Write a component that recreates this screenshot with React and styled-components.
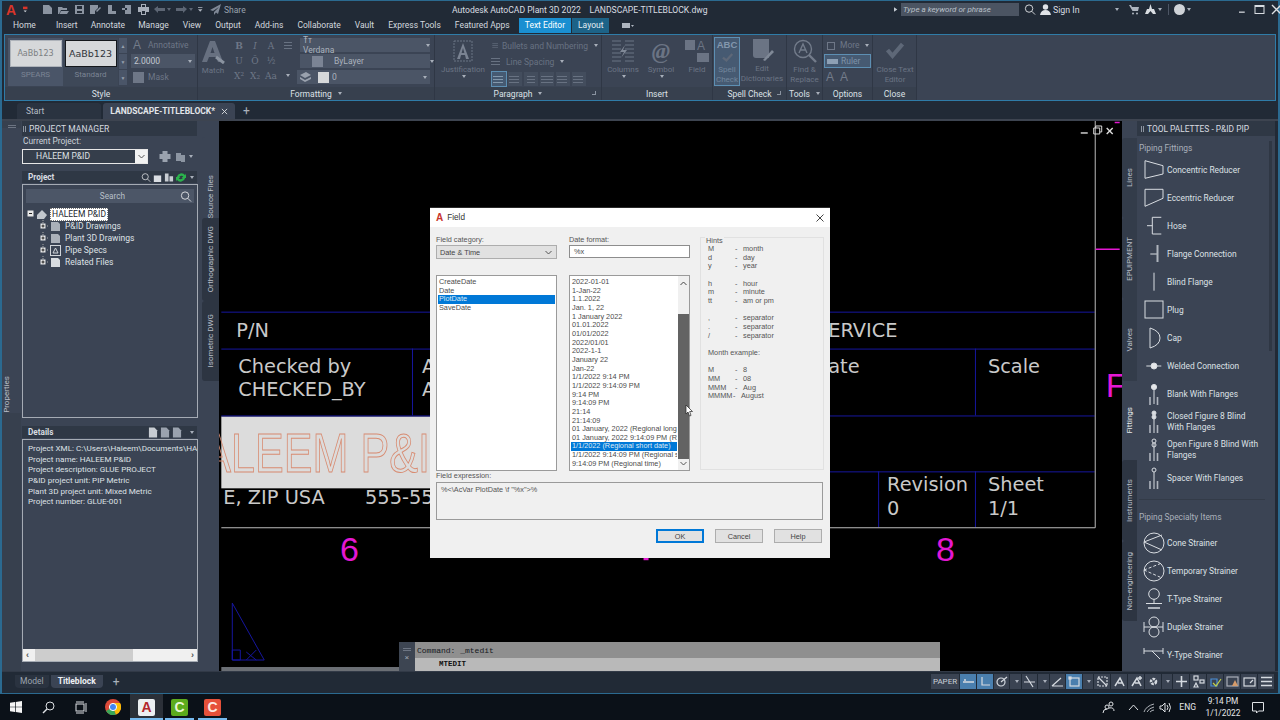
import React from 'react';
import styled, { createGlobalStyle } from 'styled-components';

const Global = createGlobalStyle`
  html, body { margin: 0; padding: 0; background: #0a0e13; }
  * { box-sizing: border-box; }
`;

const UI = `Roboto, "Liberation Sans", sans-serif`;
const DLG = `"Liberation Sans", Arial, sans-serif`;

const Page = styled.div`
  position: relative; width: 1280px; height: 720px; overflow: hidden;
  display: flex; flex-direction: column; font-family: ${UI}; font-size: 8.5px; color: #d7dce2;
`;
const Window = styled.div`
  height: 694px; display: flex; flex-direction: column; background: #212a36;
  border: 1px solid #2b6a90; border-left-width: 2px; border-right-width: 2px;
`;

/* title bar */
const TitleBar = styled.div`
  height: 17px; flex: none; display: flex; align-items: center; position: relative; padding-left: 4px;
`;
const Qat = styled.div`display: flex; align-items: center; gap: 5px; width: 446px; flex: none;`;
const LogoA = styled.span`
  font: bold 14px "Liberation Sans", sans-serif; color: #d8352a; line-height: 14px; width: 12px;
`;
const Qi = styled.svg`width: ${p => p.$w || 11}px; height: 11px; flex: none; fill: ${p => p.$c || '#8b94a1'}; stroke: none;`;
const QatLabel = styled.span`color: #9aa2ae; margin-left: -2px;`;
const WindowTitle = styled.div`flex: none; width: 442px; color: #d9dde2; font-size: 8.6px; white-space: pre;`;
const SearchBox = styled.div`
  width: 118px; height: 13px; background: #4b5462; color: #b9c0c9; font-style: italic; font-size: 8px;
  padding-left: 2px; line-height: 13px; margin: 0 5px 0 3px; flex: none;
`;
const TitleRight = styled.div`display: flex; align-items: center; flex: none;`;
const SignIn = styled.span`width: 60px; color: #d9dde2; font-size: 8.8px; margin-left: 2px;`;
const Gap = styled.span`display: inline-block; width: ${p => p.$w}px; flex: none;`;

/* menu */
const MenuRow = styled.div`height: 15px; flex: none; display: flex; align-items: stretch; padding-left: 4px;`;
const MenuTab = styled.div`
  padding: 0 ${p => p.$px ?? 7}px; margin-right: ${p => p.$mr || 0}px; line-height: 15px; color: #d3d8df;
  ${p => p.$active && 'background:#1a8fd1;color:#fff;'}
  ${p => p.$alt && 'background:#1d6388;color:#e4edf3;margin-left:1px;'}
`;
const MenuExtra = styled.svg`width: 16px; height: 15px; margin-left: 9px; fill: #aeb5bf;`;

/* ribbon */
const Ribbon = styled.div`
  height: 67px; flex: none; margin: 1px 2px 0 2px; display: flex; background: #3b4454;
  border-top: 1px solid #2f7ca8; border-bottom: 1px solid #2f7ca8; border-left: 1px solid #2f7ca8; border-right: 1px solid #2f7ca8;
`;
const RGroup = styled.div`
  width: ${p => p.$w}px; flex: none; display: flex; flex-direction: column; border-right: 1px solid #2f3745;
`;
const RBody = styled.div`flex: 1; display: flex; min-height: 0; padding: ${p => p.$pad || '3px 3px 0'}; gap: ${p => p.$gap || 0}px;`;
const RLabel = styled.div`
  height: 13px; flex: none; display: flex; align-items: center; justify-content: center; gap: 4px;
  color: #dde1e6; font-size: 8.5px; background: #37404e; position: relative;
`;
const Caret = styled.span`
  display: inline-block; width: 0; height: 0; border-left: 2px solid transparent; border-right: 2px solid transparent;
  border-top: 3px solid ${p => p.$c || '#a8afba'}; margin-left: ${p => p.$ml || 2}px; flex: none;
`;
const Launcher = styled.span`position: absolute; right: 5px; top: 4px; width: 4px; height: 4px; border-right: 1px solid #8a93a0; border-bottom: 1px solid #8a93a0;`;
const Gallery = styled.div`display: flex; height: 48px; flex: none;`;
const GalleryItem = styled.div`
  width: 55px; padding: 2px 2px 0; display: flex; flex-direction: column; align-items: center;
  background: ${p => p.$on ? '#4a5568' : '#3e4858'}; margin-right: ${p => p.$mr || 0}px;
`;
const Tile = styled.div`
  width: 52px; height: 27px; background: #d6d8da; border: 1px solid ${p => p.$on ? '#15181c' : '#aeb3ba'};
  color: ${p => p.$on ? '#31353a' : '#7c7f82'}; font-family: "DejaVu Sans", sans-serif; font-size: ${p => p.$on ? '9.5px' : '8px'};
  display: flex; align-items: center; justify-content: center; white-space: nowrap;
`;
const TileCap = styled.div`color: #7b8494; font-size: 8px; margin-top: 3px;`;
const Spinner = styled.div`width: 8px; flex: none; margin-left: 1px; display: flex; flex-direction: column; gap: 1px;`;
const SpinBtn = styled.div`height: 15px; background: #4a5568; display: flex; align-items: center; justify-content: center; color:#96a0ad; font-size: 5px;`;
const StyleOpts = styled.div`flex: 1; display: flex; flex-direction: column; margin-left: 4px; gap: 2px; min-width: 0;`;
const OptRow = styled.div`
  height: 14px; display: flex; align-items: center; gap: 4px; color: #6e7787; white-space: nowrap; padding-left: 2px;
`;
const Combo = styled.div`
  height: 14px; display: flex; align-items: center; color: ${p => p.$c || '#aab2bd'}; background: #4b5566; padding: 0 3px;
  width: ${p => p.$w ? p.$w + 'px' : 'auto'}; justify-content: space-between; gap: 3px; margin-left: ${p => p.$ml || 0}px;
`;
const BigTool = styled.div`
  width: ${p => p.$w}px; flex: none; display: flex; flex-direction: column; align-items: center; color: #6b7484; font-size: 8px;
  line-height: 10px; text-align: center; padding-top: ${p => p.$pt ?? 1}px;
  ${p => p.$on && 'border:1px solid #5d8fb3;background:#465a72;color:#72869c;'}
`;
const BigIcon = styled.svg`width: ${p => p.$w || 24}px; height: ${p => p.$h || 24}px; flex: none; margin-bottom: ${p => p.$mb ?? 2}px;`;
const FmtGrid = styled.div`
  width: 66px; flex: none; display: grid; grid-template-columns: repeat(4, 16px); grid-auto-rows: 15px; align-items: center;
  justify-items: center; color: #6e7787; font-family: "DejaVu Serif", serif; font-size: 9px; margin-left: 6px;
`;
const Stack = styled.div`display: flex; flex-direction: column; gap: ${p => p.$g ?? 2}px; flex: ${p => p.$f || '1'}; min-width: 0;`;
const ParaRow = styled.div`display: flex; align-items: center; gap: 4px; color: #687282; height: 15px; white-space: nowrap; font-size: 8.5px;`;
const AlignRow = styled.div`display: flex; gap: 0; margin-top: 1px;`;
const AlignBtn = styled.div`
  width: 16px; height: 16px; display: flex; align-items: center; justify-content: center;
  background: #434d5d; border: 1px solid ${p => p.$on ? '#5d8fb3' : '#3b4454'}; ${p => p.$on && 'background:#465a72;'}
`;
const SpellWord = styled.div`font: bold 9.5px "Liberation Sans", sans-serif; color: #8397ad; line-height: 11px; margin-top: 1px; letter-spacing: 0;`;
const OptsBox = styled.div`
  display: flex; align-items: center; gap: 3px; color: #6e7787; height: 14px; padding-left: 2px; white-space: nowrap;
  ${p => p.$on && 'border:1px solid #5d8fb3;background:#465a72;color:#7f93a8;'}
`;
const BigA = styled.span`font: 12px "Liberation Sans", sans-serif; color: #737c8b; margin-right: 3px; line-height: 14px;`;

/* doc tabs */
const DocTabs = styled.div`
  height: 20px; flex: none; display: flex; align-items: flex-end; padding-left: 15px; border-bottom: 2px solid #3d4450;
  margin-top: 0;
`;
const DocTab = styled.div`
  height: 16px; display: flex; align-items: center; gap: 6px; padding: 0 ${p => p.$px}px;
  border-radius: 3px 3px 0 0; font-size: 8.5px;
  background: ${p => p.$on ? '#3b4454' : '#2a3340'}; color: ${p => p.$on ? '#e3e6ea' : '#b7bdc6'};
  font-weight: ${p => p.$on ? 700 : 400}; margin-right: ${p => p.$mr || 0}px;
`;
const TabPlus = styled.span`font-size: 12px; color: #aab1bb; margin: 0 0 1px 8px; line-height: 14px;`;

/* main */
const Main = styled.div`flex: 1; min-height: 0; display: flex; background: #3b4454;`;
const SideStrip = styled.div`
  width: ${p => p.$w}px; flex: none; display: flex; flex-direction: column; background: #37404e; align-items: center;
`;
const Grip = styled.div`width: 8px; height: 3px; border-top: 1px solid #6d7583; border-bottom: 1px solid #6d7583; margin-top: 4px;`;
const VText = styled.span`
  writing-mode: vertical-rl; transform: rotate(180deg); font-size: 8px; color: ${p => p.$on ? '#e8ebee' : '#b8bec7'}; white-space: nowrap;
`;
const VTabs = styled.div`display: flex; flex-direction: column; width: ${p => p.$w}px; flex: none; padding-top: ${p => p.$pt}px; background: #3b4454;`;
const VTab = styled.div`
  height: ${p => p.$h}px; flex: none; display: flex; align-items: ${p => p.$al || 'center'}; justify-content: center;
  background: ${p => p.$bg || '#2d3542'}; border-radius: 3px 0 0 3px; padding-top: ${p => p.$pb || 0}px;
`;
const Panel = styled.div`width: 181px; flex: none; display: flex; flex-direction: column; padding: 0 4px 0 1px;`;
const PanelHead = styled.div`
  height: 15px; flex: none; background: #2f3845; color: #d7dbe0; display: flex; align-items: center; gap: 3px; font-size: 8.5px;
  letter-spacing: .1px; padding-left: 0; width: 175px;
`;
const VGrip = styled.span`width: 2px; height: 6px; border-left: 1px solid #8d95a1; border-right: 1px solid #8d95a1; width: 3px; margin-left: 1px;`;
const SmallLabel = styled.div`color: #cdd2d9; font-size: 8.4px; height: 11px; line-height: 11px; margin: 0 0 0 1px;`;
const ProjectRow = styled.div`display: flex; align-items: center; height: 16px; margin-top: 1px; flex: none;`;
const ProjectSelect = styled.div`
  width: 126px; height: 15px; flex: none; border: 1px solid #e7e7e7; background: #353e4b; display: flex; align-items: center;
  justify-content: space-between; padding-left: 13px; color: #dde1e5; font-size: 8.5px;
`;
const SelBtn = styled.span`width: 12px; height: 100%; background: #f2f2f2; display: flex; align-items: center; justify-content: center;`;
const Chevron = styled.svg`width: 7px; height: 5px; fill: none; stroke: ${p => p.$c || '#555'}; stroke-width: 1;`;
const SectionHead = styled.div`
  height: 12px; flex: none; background: #2f3845; display: flex; align-items: center; justify-content: space-between;
  font-weight: 700; padding: 0 3px 0 6px; width: 175px; margin-top: ${p => p.$mt}px; color: #d8dce1; font-size: 8.2px;
`;
const HeadIcons = styled.div`display: flex; gap: 2px; align-items: center;`;
const Box = styled.div`
  width: 176px; height: ${p => p.$h}px; flex: none; border: 1px solid #a5abb4; margin-top: 1px; display: flex; flex-direction: column;
`;
const TreeSearch = styled.div`
  margin: 4px 3px 0; height: 14px; background: #4c5667; color: #b9c0c9; display: flex; align-items: center; justify-content: flex-end;
  padding-right: 2px; gap: 55px; font-size: 8.2px; flex: none;
`;
const Tree = styled.div`padding: 5px 0 0 4px; display: flex; flex-direction: column;`;
const TreeRow = styled.div`display: flex; align-items: center; height: 12px; padding-left: ${p => p.$in}px; gap: 1px; font-size: 8.5px; color: #dfe2e6;`;
const TreeLabel = styled.span`
  ${p => p.$sel && 'background:#fff;color:#23282f;border:1px dotted #777;padding:0 1px;margin-left:1px;line-height:11px;'}
  margin-left: ${p => p.$sel ? 1 : 3}px; white-space: nowrap;
`;
const Details = styled.div`flex: 1; padding: 3px 0 0 5px; font-size: 8.1px; line-height: 10.67px; color: #dfe2e6; overflow: hidden; white-space: nowrap;`;
const HScroll = styled.div`height: 12px; flex: none; background: #f0f0f0; display: flex; align-items: center; justify-content: space-between; padding: 0 3px; position: relative;`;
const HThumb = styled.div`position: absolute; left: 12px; width: 98px; top: 0; bottom: 0; background: #cdcdcd;`;
const ArrowT = styled.span`font: bold 9px "Liberation Sans", sans-serif; color: #555; line-height: 10px; z-index: 1;`;

/* canvas */
const Canvas = styled.div`flex: 1; min-width: 0; position: relative; background: #000; overflow: hidden;`;
const Drawing = styled.svg`display: block; width: 100%; height: 100%;`;
const CommandLine = styled.div`
  position: absolute; left: 180px; top: 521px; width: 541px; height: 30px; display: flex; background: #3d4552;
`;
const CmdSide = styled.div`width: 16px; flex: none; display: flex; flex-direction: column; align-items: center; color: #9aa2ae; font-size: 8px; padding-top: 2px; gap: 2px;`;
const CmdBody = styled.div`flex: 1; display: flex; flex-direction: column;`;
const CmdHist = styled.div`height: 16px; background: #8f8f8f; color: #15191e; font: 8px "Liberation Mono", monospace; padding: 4px 0 0 2px; line-height: 10px;`;
const CmdInput = styled.div`flex: 1; background: #b9b9b9; color: #111; font: bold 7.5px "Liberation Mono", monospace; padding-left: 24px; line-height: 12px;`;

/* palette */
const PaletteWrap = styled.div`width: 138px; flex: none; display: flex; flex-direction: column; position: relative; overflow: hidden;`;
const PaletteHead = styled.div`height: 15px; flex: none; background: #2f3845; display: flex; align-items: center; gap: 3px; color: #d7dbe0; font-size: 8.4px; padding-left: 3px;`;
const PaletteBody = styled.div`flex: 1; overflow: hidden; padding-left: 5px;`;
const SectionTitle = styled.div`
  height: ${p => p.$h}px; display: flex; align-items: flex-end; color: #a9b0ba; font-size: 8.4px; padding: 0 0 ${p => p.$pb}px 0; margin-left: -3px;
  ${p => p.$rule && 'position:relative;'}
`;
const Rule = styled.div`position: absolute; left: 0; right: 10px; top: 7px; height: 1px; background: #333b48;`;
const Item = styled.div`height: 28px; display: flex; align-items: center; gap: 1px; color: #dde1e5; font-size: 8.4px; line-height: 11px;`;
const ItemIcon = styled.svg`width: 24px; height: 24px; flex: none; fill: none; stroke: #d9dde2; stroke-width: 1;`;
const ItemName = styled.span`width: 92px; flex: none;`;
const PaletteScroll = styled.div`position: absolute; right: 3px; top: 20px; width: 3px; height: 210px; background: #2f3744;`;
const RightGutter = styled.div`width: 3px; flex: none; background: #212a36;`;

/* bottom row */
const BottomRow = styled.div`height: 22px; flex: none; display: flex; align-items: center; padding-left: 13px; background: #212a36; border-top: 1px solid #323a47;`;
const LayoutTab = styled.div`
  height: 13px; display: flex; align-items: center; margin-top: -3px; padding: 0 ${p => p.$px}px; border-radius: 0 0 4px 4px; font-size: 8.5px;
  background: ${p => p.$on ? '#3b4454' : '#2a3340'}; color: ${p => p.$on ? '#edf0f3' : '#9ca3ae'}; font-weight: ${p => p.$on ? 700 : 400};
  margin-right: 2px;
`;
const StatusBar = styled.div`margin-left: auto; display: flex; align-items: center; gap: 1px; padding-right: 4px; margin-top: -2px;`;
const SCell = styled.div`
  width: ${p => p.$w}px; height: 15px; flex: none; display: flex; align-items: center; justify-content: center;
  background: ${p => p.$on ? '#4a7fae' : '#3a4352'}; color: #c8ced6; font-size: 8px;
`;
const SI = styled.svg`width: 13px; height: 13px; fill: none; stroke: #d5dae0; stroke-width: 1.2;`;

/* taskbar */
const Taskbar = styled.div`flex: 1; display: flex; align-items: stretch; background: #0b1118;`;
const TBtn = styled.div`
  width: ${p => p.$w}px; flex: none; display: flex; align-items: center; justify-content: center; position: relative;
  ${p => p.$on && 'background:#2b3038;'}
  ${p => p.$under && `&::after{content:"";position:absolute;left:${p.$on ? 0 : 2}px;right:${p.$on ? 0 : 2}px;bottom:0;height:2px;background:#76b9ed;}`}
`;
const AppTile = styled.div`
  width: 17px; height: 17px; border-radius: 2px; background: ${p => p.$bg}; color: ${p => p.$c}; display: flex; align-items: center; justify-content: center;
  font: bold 14px "Liberation Sans", sans-serif;
`;
const Tray = styled.div`margin-left: auto; display: flex; align-items: center; color: #e6e8ea; font-size: 8.5px;`;
const Clock = styled.div`text-align: center; width: 36px; line-height: 12.5px; font-size: 8.3px;`;
const TI = styled.svg`width: ${p => p.$w || 13}px; height: 13px; fill: none; stroke: #dfe2e5; stroke-width: 1; flex: none;`;

/* dialog */
const Dialog = styled.div`
  position: absolute; left: 430px; top: 207px; width: 400px; height: 351px; background: #f0f0f0; color: #4a4a4a;
  font-family: ${DLG}; font-size: 7.3px; display: flex; flex-direction: column; border-top: 1px solid #2a2a2a;
`;
const DlgTitle = styled.div`height: 19px; flex: none; background: #fff; display: flex; align-items: center; padding: 0 6px; color: #333; font-size: 8.2px; gap: 4px;`;
const DlgA = styled.span`font: bold 10px "Liberation Sans", sans-serif; color: #c8352c; line-height: 10px;`;
const DlgClose = styled.svg`margin-left: auto; margin-right: 0; width: 8px; height: 8px; stroke: #444; fill: none;`;
const DlgBody = styled.div`flex: 1; padding: 7px 7px 0 6px; display: flex; flex-direction: column;`;
const Columns = styled.div`display: grid; grid-template-columns: 121px 121px 122px; column-gap: 12px; height: 236px;`;
const Col = styled.div`display: flex; flex-direction: column; margin-left: ${p => p.$ml || 0}px; width: ${p => p.$wd ? p.$wd + 'px' : 'auto'};`;
const FLabel = styled.div`height: ${p => p.$h || 11}px; line-height: 9px; padding-top: 1px; color: #555;`;
const DCombo = styled.div`height: 14px; background: #e1e1e1; border: 1px solid #adadad; display: flex; align-items: center; justify-content: space-between; padding: 0 4px 0 3px; flex: none; color: #444;`;
const DInput = styled.div`height: 13px; background: #fff; border: 1px solid #8d8d8d; padding: 1px 0 0 4px; line-height: 9px; flex: none;`;
const ListBox = styled.div`flex: 1; background: #fff; border: 1px solid #9a9a9a; position: relative; padding: 2px 1px; overflow: hidden; margin-bottom: ${p => p.$mb || 0}px;`;
const LRow = styled.div`
  height: 8.67px; line-height: 8.67px; padding-left: 1px; white-space: nowrap; overflow: hidden; max-width: ${p => p.$max ? p.$max + 'px' : 'none'};
  color: #4c4c4c; ${p => p.$sel && 'background:#0078d7;color:#dfeaf5;'}
`;
const VScroll = styled.div`
  position: absolute; right: 0; top: 0; bottom: 0; width: 11px; background: #f0f0f0; display: flex; flex-direction: column; align-items: center; justify-content: space-between; padding: 5px 0 4px;
`;
const VThumb = styled.div`position: absolute; left: 0; right: 0; top: 38px; height: 145px; background: #636363;`;
const Hints = styled.div`border: 1px solid #e1e1e1; height: 233px; margin-top: 3px; position: relative; padding: 7px 0 0 7px;`;
const HintsLegend = styled.span`position: absolute; left: 4px; top: -2px; background: #f0f0f0; padding: 0 1px; color: #555;`;
const HintRow = styled.div`display: grid; grid-template-columns: ${p => p.$w || 27}px 8px 1fr; height: 8.67px; line-height: 8.67px; color: #555;`;
const HintText = styled.div`height: 8.67px; line-height: 8.67px; color: #555;`;
const Expr = styled.div`
  height: 38px; width: 387px; border: 1px solid #9a9a9a; padding: 2px 4px; line-height: 9px; flex: none; color: #555; margin-top: 3px;
`;
const DlgButtons = styled.div`display: flex; justify-content: flex-end; gap: 11px; margin-top: 9px; padding-right: 1px;`;
const DBtn = styled.div`
  width: 48px; height: 14px; display: flex; align-items: center; justify-content: center; background: #e1e1e1; color: #444;
  border: 1px solid ${p => p.$def ? '#0078d7' : '#adadad'}; ${p => p.$def && 'box-shadow: inset 0 0 0 1px #0078d7;'}
`;
const Cursor = styled.svg`position: absolute; left: 255px; top: 196px; width: 8px; height: 13px;`;

/* drawing helpers */
const check = <polyline points="5,13 11,18 21,7" fill="none" stroke="#5e6878" strokeWidth="4" />;
const lines = (n, x1, x2, s = '#687282') => Array.from({ length: n }, (_, i) => <line key={i} x1={x1} x2={x2} y1={2.5 + i * 3} y2={2.5 + i * 3} stroke={s} />);

const DOWN = () => <Chevron viewBox="0 0 7 5"><path d="M0.5 1 L3.5 4 L6.5 1" /></Chevron>;

const examples = ['2022-01-01', '1-Jan-22', '1.1.2022', 'Jan. 1, 22', '1 January 2022', '01.01.2022', '01/01/2022', '2022/01/01', '2022-1-1', 'January 22', 'Jan-22', '1/1/2022 9:14 PM', '1/1/2022 9:14:09 PM', '9:14 PM', '9:14:09 PM', '21:14', '21:14:09', '01 January, 2022 (Regional long', '01 January, 2022 9:14:09 PM (Re', '1/1/2022 (Regional short date)', '1/1/2022 9:14:09 PM (Regional s', '9:14:09 PM (Regional time)'];
const hintRows = [['M', 'month'], ['d', 'day'], ['y', 'year'], null, ['h', 'hour'], ['m', 'minute'], ['tt', 'am or pm'], null, [',', 'separator'], ['.', 'separator'], ['/', 'separator'], null];
const monthRows = [['M', '8'], ['MM', '08'], ['MMM', 'Aug']];

const Fig8 = ({ open, spacer }) => (
  <ItemIcon viewBox="0 0 24 24">
    <circle cx="12" cy={spacer ? 4 : 3} r="2" fill={open || spacer ? 'none' : '#d9dde2'} />
    {!spacer && <circle cx="12" cy="7" r="2" fill={open ? 'none' : '#d9dde2'} fill-opacity={1} />}
    <path d="M12 6V23" />
    <path d="M8 15V23M15.5 15V23" strokeWidth="1.6" stroke="#aeb4bd" />
  </ItemIcon>
);

const palette1 = [
  ['Concentric Reducer', <polygon points="3,2.7 21,7.7 21,16 3,20.3" />],
  ['Eccentric Reducer', <polygon points="3,3.3 21,3.3 21,12.3 3,20.3" />],
  ['Hose', <path d="M5 11.7H10.3M19.3 3.3H10.3V20H19.3" />],
  ['Flange Connection', <><path d="M8.3 12H15" /><path d="M15.5 3V20" strokeWidth="2" stroke="#aeb4bd" /></>],
  ['Blind Flange', <path d="M12 2.7V20.7" />],
  ['Plug', <rect x="3" y="3" width="18" height="17" />],
  ['Cap', <path d="M8 2V22Q18 19 18 12Q18 5 8 2Z" />],
  ['Welded Connection', <><path d="M4.3 12H19.3" /><circle cx="12" cy="12" r="3" fill="#e6e8ea" /></>],
  ['Blank With Flanges', <><circle cx="12" cy="5" r="2.6" fill="#e6e8ea" /><path d="M12 5V22" /><path d="M8 15V23M15.5 15V23" strokeWidth="1.6" stroke="#aeb4bd" /></>],
];
const palette2 = [
  ['Cone Strainer', <><circle cx="12" cy="12" r="10" /><path d="M2 11L20 4M2 11L20 19" /></>],
  ['Temporary Strainer', <><circle cx="12" cy="12" r="10" /><path d="M2 11L20 4M2 11L20 19" strokeDasharray="3 2" /></>],
  ['T-Type Strainer', <><circle cx="12" cy="7" r="5.3" /><path d="M12 12V16M4 16.5H20" /><path d="M6 21H18" strokeWidth="2" stroke="#aeb4bd" /></>],
  ['Duplex Strainer', <><circle cx="12" cy="7" r="5" /><circle cx="12" cy="17" r="5" /><path d="M2 12H21M2 7V17M21 7V17" /></>],
  ['Y-Type Strainer', <path d="M2 8H21M2 5V11M21 5V11M10 8L18 16" />],
];

function PaletteRow({ name, icon }) {
  return <Item><ItemIcon viewBox="0 0 24 24">{icon}</ItemIcon><ItemName>{name}</ItemName></Item>;
}

const DText = styled.text`font-family: "DejaVu Sans", sans-serif; font-size: 19.4px; fill: #c9c9c9;`;
const Mag = styled.text`font-family: "Liberation Sans", sans-serif; font-size: 34px; fill: #e417d3;`;

export default function App() {
  return (
    <Page>
      <Global />
      <Window>
        <TitleBar>
          <Qat>
            <LogoA>A</LogoA>
            <Qi viewBox="0 0 11 11" $w={7}><rect x="0" y="1" width="7" height="4" fill="#d8352a" /><path d="M1 7H6L3.5 10Z" fill="#d0d4da" /></Qi>
            <Gap $w={2} />
            <Qi viewBox="0 0 11 11"><path d="M1 1H7L10 4V10H1Z" /></Qi>
            <Qi viewBox="0 0 11 11"><path d="M0 3H4L5 4H9V6H3L1 10H0ZM3 7H11L9 10H1.5Z" /></Qi>
            <Qi viewBox="0 0 11 11"><path d="M1 1H10V10H1ZM3 2V5H8V2ZM3 7V9H8V7Z" fillRule="evenodd" /></Qi>
            <Qi viewBox="0 0 11 11"><path d="M0 1H8V4L5 7V10H0ZM6 7L10 3L11 4L7 8Z" /></Qi>
            <Qi viewBox="0 0 11 11"><path d="M2 1H6V7H10V10H2Z" /></Qi>
            <Qi viewBox="0 0 11 11"><path d="M3 1H9V10H3ZM0 4H5V6H0Z" fillRule="evenodd" /></Qi>
            <Qi viewBox="0 0 11 11" $c="#a8afba"><path d="M3 0H8V3H11V8H8V11H3V8H0V3H3ZM4 1V3H7V1ZM4 7V10H7V7Z" fillRule="evenodd" /></Qi>
            <Qi viewBox="0 0 11 11" $c="#5d6674"><path d="M0 5L4 2V4H11V7H4V9Z" /></Qi>
            <Caret $c="#5d6674" $ml={-3} />
            <Qi viewBox="0 0 11 11" $c="#5d6674"><path d="M11 5L7 2V4H0V7H7V9Z" /></Qi>
            <Caret $c="#5d6674" $ml={-3} />
            <Qi viewBox="0 0 11 11" $w={7} $c="#aeb5bf"><path d="M0 2H7V3H0ZM0 5H7L3.5 9Z" /></Qi>
            <Qi viewBox="0 0 11 11" $c="#7f8896"><path d="M11 0L0 6L3 7L9 3L4 8L4 11L6 8.5L8 10Z" /></Qi>
            <QatLabel>Share</QatLabel>
          </Qat>
          <WindowTitle>Autodesk AutoCAD Plant 3D 2022    LANDSCAPE-TITLEBLOCK.dwg</WindowTitle>
          <TitleRight>
            <Qi viewBox="0 0 6 11" $w={4} $c="#c2c8d0"><path d="M0 2L5 5.5L0 9Z" /></Qi>
            <SearchBox>Type a keyword or phrase</SearchBox>
            <TI viewBox="0 0 13 13" $w={12}><circle cx="5.5" cy="5.5" r="4" /><path d="M8.5 8.5L12 12" /></TI>
            <Gap $w={4} />
            <Qi viewBox="0 0 11 11" $c="#e0e3e7"><circle cx="5.5" cy="3" r="2.7" /><path d="M0 11Q1 6 5.5 6Q10 6 11 11Z" /></Qi>
            <SignIn>Sign In</SignIn>
            <Caret /><Gap $w={10} />
            <Qi viewBox="0 0 11 11" $c="#aeb5bf"><path d="M0 1H2L3 3H10L9 7H3.5ZM4 8.5A1 1 0 1 0 4 10.5A1 1 0 1 0 4 8.5ZM8 8.5A1 1 0 1 0 8 10.5A1 1 0 1 0 8 8.5Z" /></Qi>
            <Gap $w={5} />
            <Qi viewBox="0 0 11 11" $c="#d9dde2"><path d="M5.5 0L7 5H9L11 10H8L5.5 7L3 10H0L2 5H4Z" /></Qi>
            <Caret /><Gap $w={6} />
            <Qi viewBox="0 0 1 11" $w={1} $c="#4d5665"><rect width="1" height="11" /></Qi>
            <Gap $w={5} />
            <Qi viewBox="0 0 11 11" $c="#cfd3d8"><circle cx="5.5" cy="5.5" r="5.5" /></Qi>
            <Caret /><Gap $w={48} />
            <Qi viewBox="0 0 11 11" $w={9} $c="#d9dde2"><rect x="0" y="8" width="7" height="1.5" /></Qi>
            <Gap $w={6} />
            <Qi viewBox="0 0 11 11" $c="none"><rect x="1" y="1.5" width="9" height="8" fill="none" stroke="#d9dde2" /><rect x="1" y="1" width="9" height="2" fill="#d9dde2" /></Qi>
            <Gap $w={6} />
            <TI viewBox="0 0 11 11" $w={11}><path d="M1 1L10 10M10 1L1 10" strokeWidth="1.4" /></TI>
          </TitleRight>
        </TitleBar>
        <MenuRow>
          <MenuTab $px={7} $mr={6}>Home</MenuTab>
          <MenuTab $px={7}>Insert</MenuTab>
          <MenuTab $px={6}>Annotate</MenuTab>
          <MenuTab $px={7}>Manage</MenuTab>
          <MenuTab $px={7}>View</MenuTab>
          <MenuTab $px={7}>Output</MenuTab>
          <MenuTab $px={7}>Add-ins</MenuTab>
          <MenuTab $px={7}>Collaborate</MenuTab>
          <MenuTab $px={7}>Vault</MenuTab>
          <MenuTab $px={7}>Express Tools</MenuTab>
          <MenuTab $px={7} $mr={2}>Featured Apps</MenuTab>
          <MenuTab $active $px={6}>Text Editor</MenuTab>
          <MenuTab $alt $px={6}>Layout</MenuTab>
          <MenuExtra viewBox="0 0 16 15"><rect x="4" y="5" width="8" height="5" /><path d="M13 7H16L14.5 9Z" /></MenuExtra>
        </MenuRow>
        <Ribbon>
          <RGroup $w={193}>
            <RBody $pad="3px 2px 0 3px">
              <Gallery>
                <GalleryItem $on><Tile>AaBb123</Tile><TileCap>SPEARS</TileCap></GalleryItem>
                <GalleryItem><Tile $on>AaBb123</Tile><TileCap>Standard</TileCap></GalleryItem>
              </Gallery>
              <Spinner><SpinBtn>▲</SpinBtn><SpinBtn>▼</SpinBtn><SpinBtn>▼</SpinBtn></Spinner>
              <StyleOpts>
                <OptRow><BigA as="span">A</BigA>Annotative</OptRow>
                <Combo $c="#c2c8d0">2.0000<Caret /></Combo>
                <OptRow><Qi viewBox="0 0 11 11" $c="#6e7787"><rect width="11" height="11" /></Qi>Mask</OptRow>
              </StyleOpts>
            </RBody>
            <RLabel>Style</RLabel>
          </RGroup>
          <RGroup $w={237}>
            <RBody $pad="3px 4px 0 3px">
              <BigTool $w={24} $pt={2}>
                <BigIcon viewBox="0 0 24 24"><path d="M9 1H14L22 22H17L15 17H8L6 22H1ZM11.5 7L9.5 13H13.5Z" fill="#677080" fillRule="evenodd" /><path d="M15 17L23 23" stroke="#8a93a0" strokeWidth="3" /></BigIcon>
                Match
              </BigTool>
              <FmtGrid>
                <span><b>B</b></span><span><i>I</i></span><span>A</span><svg width="12" height="11" viewBox="0 0 12 11">{lines(3, 3, 11)}</svg>
                <span>U</span><span>Ō</span><span>½</span><span />
                <span>X²</span><span>X₂</span><span>Aa</span><Caret />
              </FmtGrid>
              <Stack $g={2}>
                <Combo $ml={3} $c="#aab2bd">Ŧᴛ Verdana<Gap $w={84} /><Caret /></Combo>
                <Combo $ml={3}><Gap $w={6} /><Qi viewBox="0 0 11 11" $c="#7b8494"><rect width="11" height="11" /></Qi><Gap $w={5} />ByLayer<Gap $w={58} /><Caret /></Combo>
                <Combo $ml={0}><Qi viewBox="0 0 11 11" $c="#9aa2ae"><path d="M0 3L6 0L11 3L5 6ZM0 5L5 8L11 5V7L5 10L0 7Z" /></Qi><Gap $w={1} /><Qi viewBox="0 0 11 11" $c="#d6d8da"><rect width="11" height="11" /></Qi>0<Gap $w={78} /><Caret /></Combo>
              </Stack>
            </RBody>
            <RLabel>Formatting<Caret /></RLabel>
          </RGroup>
          <RGroup $w={167}>
            <RBody $pad="3px 3px 0 6px" $gap={6}>
              <BigTool $w={44} $pt={1}>
                <BigIcon viewBox="0 0 24 24"><rect x="3" y="2" width="18" height="20" fill="none" stroke="#6b7484" strokeDasharray="2 1" /><path d="M12 4L18 20H15L14 16H10L9 20H6ZM12 9L10.6 14H13.4Z" fill="#7a8392" fillRule="evenodd" /></BigIcon>
                Justification
                <Caret $ml={0} />
              </BigTool>
              <Stack $g={1}>
                <ParaRow><svg width="11" height="11" viewBox="0 0 11 11">{lines(3, 2, 11)}</svg>Bullets and Numbering<Caret /></ParaRow>
                <ParaRow><svg width="11" height="11" viewBox="0 0 11 11">{lines(3, 0, 9)}</svg>Line Spacing<Caret /></ParaRow>
                <AlignRow>
                  {[1, 2, 3, 4, 5, 6].map(i => (
                    <AlignBtn key={i} $on={i === 1}><svg width="12" height="11" viewBox="0 0 12 11">{lines(3, i === 3 ? 2 : 0, i === 4 ? 12 : 10, i === 1 ? '#8499ad' : '#687282')}</svg></AlignBtn>
                  ))}
                </AlignRow>
              </Stack>
            </RBody>
            <RLabel>Paragraph<Caret /><Launcher /></RLabel>
          </RGroup>
          <RGroup $w={111}>
            <RBody $pad="3px 2px 0 3px" $gap={2}>
              <BigTool $w={36}>
                <BigIcon viewBox="0 0 24 24">{[2, 6, 10, 14, 18, 22].map(y => <path key={y} d={`M1 ${y}H10M14 ${y}H23`} stroke="#6b7484" />)}<path d="M14 6L9 13H13L10 19L16 11H12Z" fill="#808997" /></BigIcon>
                Columns<Caret $ml={0} />
              </BigTool>
              <BigTool $w={36}>
                <BigIcon viewBox="0 0 24 24"><text x="12" y="19" textAnchor="middle" fontFamily="Liberation Serif" fontStyle="italic" fontWeight="700" fontSize="22" fill="#6b7484">@</text></BigIcon>
                Symbol<Caret $ml={0} />
              </BigTool>
              <BigTool $w={32}>
                <BigIcon viewBox="0 0 24 24"><rect x="0" y="1" width="10" height="10" fill="#6b7484" /><rect x="12" y="14" width="12" height="9" fill="#6b7484" /><text x="12" y="11" fontFamily="Liberation Sans" fontSize="12" fill="#6b7484">A</text></BigIcon>
                Field
              </BigTool>
            </RBody>
            <RLabel>Insert</RLabel>
          </RGroup>
          <RGroup $w={74}>
            <RBody $pad="2px 1px 1px 1px" $gap={2}>
              <BigTool $w={26} $on $pt={0}>
                <SpellWord>ABC</SpellWord>
                <BigIcon viewBox="0 0 24 24" $w={18} $h={14} $mb={1}>{check}</BigIcon>
                Spell Check
              </BigTool>
              <BigTool $w={40}>
                <BigIcon viewBox="0 0 24 24"><path d="M3 1H19V20H6Q3 20 3 17Z" fill="#6b7484" /><path d="M13 22L22 12L24 14L15 23Z" fill="#808997" /></BigIcon>
                Edit Dictionaries
              </BigTool>
            </RBody>
            <RLabel>Spell Check<Launcher /></RLabel>
          </RGroup>
          <RGroup $w={36}>
            <RBody $pad="3px 0 0">
              <BigTool $w={35}>
                <BigIcon viewBox="0 0 24 24" fill="none" stroke="#737c8b" strokeWidth="1.4"><circle cx="10" cy="10" r="8.5" /><path d="M16 16L23 23" strokeWidth="2.4" /><path d="M6 14L10 5L14 14M7.5 11H12.5" /></BigIcon>
                Find & Replace
              </BigTool>
            </RBody>
            <RLabel>Tools<Caret /></RLabel>
          </RGroup>
          <RGroup $w={50}>
            <RBody $pad="3px 1px 0 1px">
              <Stack $g={2}>
                <OptsBox><Qi viewBox="0 0 11 11" $c="#6e7787"><path d="M1 2H9V10H1ZM2 3V9H8V3Z" fillRule="evenodd" /></Qi>More<Caret /></OptsBox>
                <OptsBox $on><Qi viewBox="0 0 11 11" $c="#8ea0b4"><rect y="3" width="11" height="5" /></Qi>Ruler</OptsBox>
                <OptsBox><BigA>A</BigA><BigA>A</BigA></OptsBox>
              </Stack>
            </RBody>
            <RLabel>Options</RLabel>
          </RGroup>
          <RGroup $w={44}>
            <RBody $pad="4px 0 0">
              <BigTool $w={44}>
                <BigIcon viewBox="0 0 24 24" $w={22} $h={20} $mb={5}><polyline points="3,12 9,19 21,5" fill="none" stroke="#5e6878" strokeWidth="5" /></BigIcon>
                Close Text Editor
              </BigTool>
            </RBody>
            <RLabel>Close</RLabel>
          </RGroup>
        </Ribbon>
        <DocTabs>
          <DocTab $px={9} $mr={2} >Start<Gap $w={42} /></DocTab>
          <DocTab $on $px={7}>LANDSCAPE-TITLEBLOCK*<TI viewBox="0 0 8 8" $w={7}><path d="M1 1L7 7M7 1L1 7" /></TI></DocTab>
          <TabPlus>+</TabPlus>
        </DocTabs>
        <Main>
          <SideStrip $w={19}>
            <Grip />
            <VTabs $w={19} $pt={248}><VText>Properties</VText></VTabs>
          </SideStrip>
          <Panel>
            <PanelHead><VGrip />PROJECT MANAGER</PanelHead>
            <SmallLabel>Current Project:</SmallLabel>
            <ProjectRow>
              <ProjectSelect>HALEEM P&amp;ID<SelBtn><DOWN /></SelBtn></ProjectSelect>
              <Gap $w={10} />
              <Qi viewBox="0 0 11 11" $w={14} $c="#9aa2ae"><path d="M3 0H8V3H11V8H8V11H3V8H0V3H3Z" /></Qi>
              <Gap $w={2} />
              <Qi viewBox="0 0 11 11" $w={13} $c="#8c95a2"><path d="M1 2H6V10H1ZM6 4H10V11H6Z" /></Qi>
              <Caret />
            </ProjectRow>
            <SectionHead $mt={7}>Project
              <HeadIcons>
                <TI viewBox="0 0 13 13" $w={10}><circle cx="5.5" cy="5.5" r="4" /><path d="M8.5 8.5L12 12" /></TI>
                <Qi viewBox="0 0 11 11" $w={9} $c="#d9dde2"><path d="M1 3H10V11H1Z" /></Qi>
                <Qi viewBox="0 0 11 11" $w={10} $c="#c7ccd2"><path d="M1 1H5V10H1ZM6 4H10V10H6Z" /></Qi>
                <Qi viewBox="0 0 11 11" $w={10} $c="#2bb24c"><path d="M1 5A5 5 0 0 1 10 3L11 1V6H6L8 4.5A3 3 0 0 0 3 6ZM10 6A5 5 0 0 1 1 8L0 10V5H5L3 6.5A3 3 0 0 0 8 5Z" /></Qi>
                <Caret />
              </HeadIcons>
            </SectionHead>
            <Box $h={234}>
              <TreeSearch>Search<TI viewBox="0 0 13 13" $w={12}><circle cx="5.5" cy="5.5" r="4" /><path d="M8.5 8.5L12 12" /></TI></TreeSearch>
              <Tree>
                <TreeRow $in={0}>
                  <svg width="8" height="8" viewBox="0 0 8 8"><rect x=".5" y=".5" width="6" height="6" fill="#e8e8e8" /><path d="M2 3.5H5" stroke="#222" /></svg>
                  <svg width="12" height="11" viewBox="0 0 12 11"><path d="M1 6L6 1L11 6L8 10H1Z" fill="#c2c7cd" /></svg>
                  <TreeLabel $sel>HALEEM P&amp;ID</TreeLabel>
                </TreeRow>
                {['P&ID Drawings', 'Plant 3D Drawings', 'Pipe Specs', 'Related Files'].map((t, i) => (
                  <TreeRow key={t} $in={13}>
                    <svg width="9" height="12" viewBox="0 0 9 12"><path d="M3 0V3M7 6H9" stroke="#aaa" strokeDasharray="1 1" /><rect x=".5" y="3.5" width="5" height="5" fill="#e8e8e8" /><path d="M1.5 6H4.5M3 4.5V7.5" stroke="#222" /></svg>
                    <svg width="11" height="11" viewBox="0 0 11 11">
                      {i === 2 ? <><rect x=".5" y=".5" width="10" height="10" fill="none" stroke="#d0d4d9" /><path d="M3 8L5.5 3L8 8Z" fill="none" stroke="#d0d4d9" /></> : <path d="M1 1H8L10 3V10H1Z" fill={i === 3 ? '#d8dce0' : '#aab0b9'} />}
                    </svg>
                    <TreeLabel>{t}</TreeLabel>
                  </TreeRow>
                ))}
              </Tree>
            </Box>
            <SectionHead $mt={8}>Details
              <HeadIcons>
                <Qi viewBox="0 0 11 11" $w={10} $c="#c7ccd2"><path d="M1 0H7L10 3V11H1Z" /></Qi>
                <Qi viewBox="0 0 11 11" $w={10} $c="#9aa2ae"><path d="M1 0H7L10 3V11H1Z" /></Qi>
                <Qi viewBox="0 0 11 11" $w={10} $c="#9aa2ae"><path d="M1 0H7L10 3V11H1Z" /></Qi>
                <Gap $w={2} /><Caret />
              </HeadIcons>
            </SectionHead>
            <Box $h={223}>
              <Details>
                Project XML: C:\Users\Haleem\Documents\HAI<br />
                Project name: HALEEM P&amp;ID<br />
                Project description: GLUE PROJECT<br />
                P&amp;ID project unit: PIP Metric<br />
                Plant 3D project unit: Mixed Metric<br />
                Project number: GLUE-001
              </Details>
              <HScroll><HThumb /><ArrowT>‹</ArrowT><ArrowT>›</ArrowT></HScroll>
            </Box>
          </Panel>
          <VTabs $w={17} $pt={16}>
            <VTab $h={81} $bg="#3b4454" $al="flex-end" $pb={0}><VText>Source Files</VText></VTab>
            <VTab $h={83}><VText>Orthographic DWG</VText></VTab>
            <VTab $h={80}><VText>Isometric DWG</VText></VTab>
          </VTabs>
          <Canvas>
            <Drawing viewBox="222 120 900 551" fontFamily="Liberation Sans">
              <rect x="222" y="416" width="210" height="72" fill="#dcdcdc" />
              <g stroke="#1616a0" strokeWidth="1">
                <path d="M222 311.5H1097M222 348.5H1097M222 415.5H1097M830 471.5H1097M880.5 471V527M977.5 348V415M977.5 471V527M413.5 348V415" />
                <path d="M233 603L265 660H233ZM233 650H241V660H233ZM247 652L257 660M257 650L247 660" fill="none" />
              </g>
              <path d="M222 527.5H1097.5V120" fill="none" stroke="#bcbcbc" />
              <path d="M1098 248.5H1122M1117 121.5H1122M1120 375H1122" stroke="#e417d3" strokeWidth="1.4" />
              <DText x="237" y="336">P/N</DText>
              <DText x="239" y="372">Checked by</DText>
              <DText x="239" y="396">CHECKED_BY</DText>
              <DText x="423" y="372">A</DText>
              <DText x="423" y="396">A</DText>
              <text x="203" y="472" textLength="228" lengthAdjust="spacingAndGlyphs" fontFamily="Liberation Sans" fontSize="56" fill="none" stroke="#d88c72" strokeWidth="1">ALEEM P&amp;I</text>
              <DText x="224" y="504">E, ZIP USA</DText>
              <DText x="366" y="504">555-55</DText>
              <DText x="830" y="336">ERVICE</DText>
              <DText x="830" y="372">ate</DText>
              <DText x="990" y="372">Scale</DText>
              <DText x="889" y="491">Revision</DText>
              <DText x="889" y="515">0</DText>
              <DText x="990" y="491">Sheet</DText>
              <DText x="990" y="515">1/1</DText>
              <Mag x="341" y="561">6</Mag>
              <Mag x="938" y="561">8</Mag>
              <Mag x="1108" y="397">F</Mag>
              <rect x="645" y="557" width="5" height="3" fill="#e417d3" />
              <path d="M1083 132H1090" stroke="#dcdcdc" strokeWidth="1.4" />
              <path d="M1096 127H1102V133H1096ZM1098 127V125H1104V131H1102" fill="none" stroke="#dcdcdc" />
              <path d="M1109 127L1115 133M1115 127L1109 133" stroke="#dcdcdc" strokeWidth="1.4" />
              <rect x="222" y="667" width="190" height="4" fill="#6b6f75" />
            </Drawing>
            <CommandLine>
              <CmdSide><Grip /><span>×</span></CmdSide>
              <CmdBody>
                <CmdHist>Command: _mtedit</CmdHist>
                <CmdInput>MTEDIT</CmdInput>
              </CmdBody>
            </CommandLine>
          </Canvas>
          <VTabs $w={15} $pt={17}>
            <VTab $h={80} $bg="#333c4a"><VText>Lines</VText></VTab>
            <VTab $h={81} $bg="#333c4a"><VText>EPUIPMENT</VText></VTab>
            <VTab $h={82} $bg="#333c4a"><VText>Valves</VText></VTab>
            <VTab $h={79} $bg="#3b4454"><VText $on>Fittings</VText></VTab>
            <VTab $h={81}><VText>Instruments</VText></VTab>
            <VTab $h={80}><VText>Non-engineering</VText></VTab>
          </VTabs>
          <PaletteWrap>
            <PaletteHead><VGrip />TOOL PALETTES - P&amp;ID PIP</PaletteHead>
            <PaletteBody>
              <SectionTitle $h={20} $pb={3}>Piping Fittings</SectionTitle>
              {palette1.map(([n, ic]) => <PaletteRow key={n} name={n} icon={ic} />)}
              <Item><Fig8 /><ItemName>Closed Figure 8 Blind With Flanges</ItemName></Item>
              <Item><Fig8 open /><ItemName>Open Figure 8 Blind With Flanges</ItemName></Item>
              <Item><Fig8 spacer /><ItemName>Spacer With Flanges</ItemName></Item>
              <SectionTitle $h={37} $pb={7} $rule><Rule />Piping Specialty Items</SectionTitle>
              {palette2.map(([n, ic]) => <PaletteRow key={n} name={n} icon={ic} />)}
            </PaletteBody>
            <PaletteScroll />
          </PaletteWrap>
          <RightGutter />
        </Main>
        <BottomRow>
          <LayoutTab $px={5}>Model</LayoutTab>
          <LayoutTab $on $px={7}>Titleblock</LayoutTab>
          <TabPlus>+</TabPlus>
          <StatusBar>
            <SCell $w={28}>PAPER</SCell>
            <SCell $w={16} $on><SI viewBox="0 0 13 13"><path d="M1 7H12M3 4V6" strokeWidth="1.5" /></SI></SCell>
            <SCell $w={16} $on><SI viewBox="0 0 13 13"><path d="M3 2V10H11" /></SI></SCell>
            <SCell $w={15}><SI viewBox="0 0 13 13"><circle cx="6" cy="7" r="4" /><path d="M6 7L12 2" /></SI></SCell>
            <SCell $w={11}><Caret /></SCell>
            <SCell $w={15}><SI viewBox="0 0 13 13"><path d="M3 1L10 12M1 7H12" /></SI></SCell>
            <SCell $w={11}><Caret /></SCell>
            <SCell $w={15}><SI viewBox="0 0 13 13"><path d="M1 11H12M1 11L10 3" /></SI></SCell>
            <SCell $w={16} $on><SI viewBox="0 0 13 13"><rect x="2" y="3" width="9" height="8" /><rect x="1" y="2" width="2" height="2" fill="#d5dae0" /></SI></SCell>
            <SCell $w={10}><Caret /></SCell>
            <SCell $w={16}><SI viewBox="0 0 13 13"><rect x="2" y="2" width="9" height="9" strokeDasharray="2 1" /><path d="M2 2L11 11" /></SI></SCell>
            <SCell $w={16}><SI viewBox="0 0 13 13"><path d="M2 11L7 3L11 11M5 8H9" strokeWidth="1.5" /></SI></SCell>
            <SCell $w={16}><SI viewBox="0 0 13 13"><path d="M2 11L7 3L11 11M5 8H9M10 1V5M8 3H12" strokeWidth="1.5" /></SI></SCell>
            <SCell $w={16}><SI viewBox="0 0 13 13"><circle cx="6.5" cy="6.5" r="2.5" strokeWidth="2.6" strokeDasharray="2.5 1" /></SI></SCell>
            <SCell $w={10}><Caret /></SCell>
            <SCell $w={16}><SI viewBox="0 0 13 13"><path d="M6.5 1V12M1 6.5H12" strokeWidth="1.6" /></SI></SCell>
            <SCell $w={16}><SI viewBox="0 0 13 13"><rect x="2" y="1" width="4" height="4" /><rect x="8" y="5" width="4" height="3" /><path d="M2 12L4 8L6 12Z" /></SI></SCell>
            <SCell $w={16}><SI viewBox="0 0 13 13"><path d="M2 4H8V11H2Z" stroke="#4a90d9" /><path d="M4 8L7 11L12 4" stroke="#c2d04a" /></SI></SCell>
            <SCell $w={16}><SI viewBox="0 0 13 13"><rect x="1" y="2" width="11" height="9" stroke="#aab0b9" /><path d="M6 11L9 5L12 11Z" fill="#d69b6a" stroke="none" /></SI></SCell>
            <SCell $w={16}><SI viewBox="0 0 13 13"><rect x="1" y="3" width="11" height="8" /><path d="M7 8L10 5" /></SI></SCell>
            <SCell $w={16}><SI viewBox="0 0 13 13"><path d="M1 2.5H12M1 6.5H12M1 10.5H12" strokeWidth="1.4" /></SI></SCell>
          </StatusBar>
        </BottomRow>
      </Window>
      <Taskbar>
        <TBtn $w={32}><svg width="12" height="12" viewBox="0 0 12 12" fill="#f5f5f5"><path d="M0 1.8L5 1V5.7H0ZM5.7 .9L12 0V5.7H5.7ZM0 6.3H5V11L0 10.2ZM5.7 6.3H12V12L5.7 11.1Z" /></svg></TBtn>
        <TBtn $w={32}><TI viewBox="0 0 13 13"><circle cx="8" cy="5" r="4" /><path d="M5 8L1 12" strokeWidth="1.4" /></TI></TBtn>
        <TBtn $w={32}><TI viewBox="0 0 13 13"><rect x="2" y="3" width="8" height="7" /><path d="M2 1H10M2 12H10M12 2V11" /></TI></TBtn>
        <TBtn $w={34}>
          <svg width="16" height="16" viewBox="0 0 16 16"><circle cx="8" cy="8" r="8" fill="#dd4b39" /><path d="M8 8L1 12A8 8 0 0 0 11 15.5Z" fill="#3aa757" /><path d="M8 8L11 15.5A8 8 0 0 0 15 4H8Z" fill="#fbbc05" /><circle cx="8" cy="8" r="3.6" fill="#4285f4" stroke="#fff" /></svg>
        </TBtn>
        <TBtn $w={33} $on $under><AppTile $bg="#eceff1" $c="#b3262b">A</AppTile></TBtn>
        <TBtn $w={33} $under><AppTile $bg="#5cab1d" $c="#eaf6d8">C</AppTile></TBtn>
        <TBtn $w={33} $under><AppTile $bg="#e6513a" $c="#fde9e3">C</AppTile></TBtn>
        <Tray>
          <TI viewBox="0 0 13 13"><circle cx="5" cy="6" r="2" /><circle cx="9" cy="3" r="2" /><path d="M1 12Q1 8 5 8M7 7Q12 6 12 10" /></TI>
          <Gap $w={12} />
          <TI viewBox="0 0 13 13"><path d="M2 9L6.5 4L11 9" /></TI>
          <Gap $w={3} />
          <TI viewBox="0 0 13 13"><path d="M1 11Q3 5 11 3M4 11Q6 7 11 6M7 11Q9 9 11 9" stroke="#aeb3b9" /></TI>
          <Gap $w={3} />
          <TI viewBox="0 0 13 13"><path d="M1 5H3L6 2V11L3 8H1ZM8 4Q10 6.5 8 9M10 2Q13 6.5 10 11" /></TI>
          <Gap $w={7} />
          <span>ENG</span>
          <Gap $w={9} />
          <Clock>9:14 PM<br />1/1/2022</Clock>
          <Gap $w={10} />
          <TI viewBox="0 0 13 13" $w={14}><path d="M1 1.5H12V10H7L5 12V10H1Z" /></TI>
          <Gap $w={15} />
        </Tray>
      </Taskbar>
      <Dialog>
        <DlgTitle>
          <DlgA>A</DlgA>Field
          <DlgClose viewBox="0 0 8 8"><path d="M.5 .5L7.5 7.5M7.5 .5L.5 7.5" /></DlgClose>
        </DlgTitle>
        <DlgBody>
          <Columns>
            <Col>
              <FLabel $h={11}>Field category:</FLabel>
              <DCombo>Date &amp; Time<DOWN /></DCombo>
              <FLabel $h={16}><br /></FLabel>
              <ListBox>
                <LRow>CreateDate</LRow>
                <LRow>Date</LRow>
                <LRow $sel>PlotDate</LRow>
                <LRow>SaveDate</LRow>
              </ListBox>
            </Col>
            <Col>
              <FLabel $h={11}>Date format:</FLabel>
              <DInput>%x</DInput>
              <FLabel $h={17}><br /></FLabel>
              <ListBox>
                {examples.map((e, i) => <LRow key={i} $sel={i === 19} $max={106}>{e}</LRow>)}
                <VScroll>
                  <Chevron viewBox="0 0 7 5" $c="#444"><path d="M.5 4L3.5 1L6.5 4" /></Chevron>
                  <VThumb />
                  <DOWN />
                </VScroll>
              </ListBox>
            </Col>
            <Col $ml={-2}>
              <Hints>
                <HintsLegend>Hints</HintsLegend>
                {hintRows.map((r, i) => r ? <HintRow key={i}><span>{r[0]}</span><span>-</span><span>{r[1]}</span></HintRow> : <HintText key={i}>&nbsp;</HintText>)}
                <HintText>Month example:</HintText>
                <HintText>&nbsp;</HintText>
                {monthRows.map(r => <HintRow key={r[0]}><span>{r[0]}</span><span>-</span><span>{r[1]}</span></HintRow>)}
                <HintRow $w={25}><span>MMMM</span><span>-</span><span>August</span></HintRow>
              </Hints>
            </Col>
          </Columns>
          <FLabel $h={9}>Field expression:</FLabel>
          <Expr>%&lt;\AcVar PlotDate \f "%x"&gt;%</Expr>
          <DlgButtons>
            <DBtn $def>OK</DBtn>
            <DBtn>Cancel</DBtn>
            <DBtn>Help</DBtn>
          </DlgButtons>
        </DlgBody>
        <Cursor viewBox="0 0 8 13"><path d="M1 1V10L3 8L4.5 12L6 11.5L4.7 7.5H7.5Z" fill="#fff" stroke="#222" strokeWidth=".7" /></Cursor>
      </Dialog>
    </Page>
  );
}
